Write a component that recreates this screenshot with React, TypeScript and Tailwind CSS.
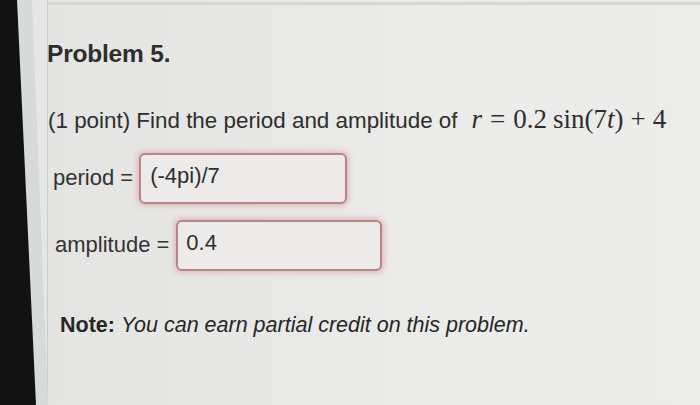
import React from "react";

export default function App() {
  const sans = "font-['Liberation_Sans',Arial,sans-serif]";
  const serif = "font-['Liberation_Serif','Times_New_Roman',serif]";
  return (
    <div className={`w-[700px] h-[405px] flex overflow-hidden bg-[#e6e6e4] ${sans}`}>
      <div className="w-[50px] h-full shrink-0">
        <div className="w-full h-full bg-[#d7dada] [clip-path:polygon(0_0,32px_0,48px_100%,0_100%)]">
          <div className="w-full h-full bg-[#121212] [clip-path:polygon(0_0,17px_0,36px_100%,0_100%)]" />
        </div>
      </div>
      <div className="flex-1 h-full flex flex-col bg-[linear-gradient(to_right,#e4e4e2,#ebebe9_60%,#ececea)] text-[#2e2e2e] -ml-[3px] border-l border-[#c9cccc]">
        <div className="h-[3px] bg-[#d6d6d4] mt-[2px]" />
        <div className="pl-[0px] pt-[37px] text-[24.5px] font-bold leading-none tracking-[-0.2px] -ml-[1px]">Problem 5.</div>
        <div className="pt-[39px] text-[22.4px] leading-none flex items-baseline whitespace-nowrap">
          <span>(1 point) Find the period and amplitude of</span>
          <span className={`${serif} text-[27px] flex items-baseline ml-[14px]`}>
            <i>r</i>
            <span className="mx-[8px]">=</span>
            <span>0.2</span>
            <span className="ml-[6px]">sin(7<i>t</i>)</span>
            <span className="mx-[7px]">+</span>
            <span>4</span>
          </span>
        </div>
        <div className="pt-[20px] flex items-center text-[22px] leading-none ml-[5px]">
          <span className="text-[#333]">period =</span>
          <div className="ml-[6px] w-[208px] h-[51px] rounded-[6px] border-2 border-[#b78589] bg-[#ecebe9] shadow-[0_0_5px_2px_rgba(220,150,155,0.55)] flex items-center pl-[9px] pb-[4px]">
            (-4pi)/7
          </div>
        </div>
        <div className="pt-[16px] flex items-center text-[22px] leading-none ml-[7px]">
          <span className="text-[#333]">amplitude =</span>
          <div className="ml-[7px] w-[206px] h-[51px] rounded-[6px] border-2 border-[#b78589] bg-[#ecebe9] shadow-[0_0_5px_2px_rgba(220,150,155,0.55)] flex items-center pl-[8px] pb-[4px]">
            0.4
          </div>
        </div>
        <div className="pt-[44px] ml-[12px] text-[21.5px] leading-none text-[#262626]">
          <span className="font-bold">Note:</span> <i>You can earn partial credit on this problem.</i>
        </div>
      </div>
    </div>
  );
}
